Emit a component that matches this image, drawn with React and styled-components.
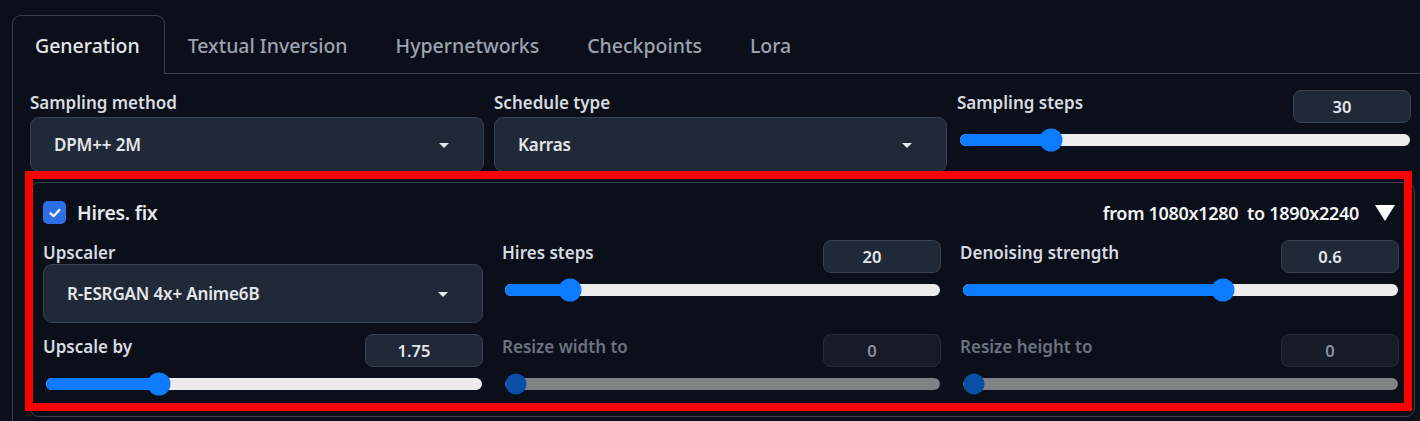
import React from "react";
import styled, { createGlobalStyle } from "styled-components";

const Global = createGlobalStyle`
  html, body { margin: 0; padding: 0; background: #0b0f19; overflow: hidden; }
  body { font-family: "Noto Sans", "Open Sans", sans-serif; color: #e5e7eb; }
  * { box-sizing: border-box; }
`;

const Page = styled.div`
  width: 1420px;
  height: 421px;
  padding: 16px 0 0 12px;
  overflow: hidden;
`;

const Tabs = styled.div`
  width: 1420px;
`;

const TabList = styled.div`
  display: flex;
  align-items: flex-end;
  border-bottom: 1px solid #374151;
  height: 58px;
`;

const Tab = styled.div`
  height: ${(p) => (p.$active ? "59px" : "57px")};
  margin-bottom: ${(p) => (p.$active ? "-1px" : "0")};
  padding: 0 24px 0 22px;
  display: flex;
  align-items: center;
  font-size: 19.5px;
  font-weight: 500;
  color: ${(p) => (p.$active ? "#e5e7eb" : "#9ca3af")};
  background: #0b0f19;
  border: 1px solid ${(p) => (p.$active ? "#374151" : "transparent")};
  border-bottom: none;
  border-radius: 9px 9px 0 0;
`;

const Panel = styled.div`
  border: 1px solid #374151;
  border-top: none;
  padding: 16px 16px 20px 17px;
  height: 360px;
`;

const TopRow = styled.div`
  display: grid;
  grid-template-columns: 454px 453px 454px;
  column-gap: 10px;
`;

const Field = styled.div`
  display: flex;
  flex-direction: column;
`;

const Label = styled.div`
  padding-top: 2px;
  font-size: 17px;
  font-weight: 600;
  line-height: 22px;
  color: ${(p) => (p.$disabled ? "#6b7280" : "#d8dbe0")};
`;

const SelectBox = styled.div`
  margin-top: ${(p) => p.$mt}px;
  height: ${(p) => p.$h}px;
  background: #1f2937;
  border: 1px solid #374151;
  border-radius: 9px;
  display: flex;
  align-items: center;
  justify-content: space-between;
  padding: 0 34px 0 23px;
  font-size: 17px;
  font-weight: 600;
  color: #e5e7eb;
  letter-spacing: -0.15px;
`;

const Caret = styled.span`
  width: 0;
  height: 0;
  border-left: 5px solid transparent;
  border-right: 5px solid transparent;
  border-top: 5px solid #e5e7eb;
  margin-top: 2px;
`;

const SliderHead = styled.div`
  display: flex;
  justify-content: space-between;
  align-items: flex-start;
  height: 33px;
`;

const NumberBox = styled.div`
  width: 118px;
  height: 33px;
  background: ${(p) => (p.$disabled ? "#151b27" : "#1f2937")};
  border: 1px solid ${(p) => (p.$disabled ? "#252d3a" : "#374151")};
  border-radius: 8px;
  display: flex;
  align-items: center;
  justify-content: center;
  padding-right: 20px;
  font-size: 16.5px;
  font-weight: 600;
  color: ${(p) => (p.$disabled ? "#8b919c" : "#e5e7eb")};
`;

const Track = styled.div`
  position: relative;
  margin: 11px 1px 0 3px;
  height: 12px;
  border-radius: 6px;
  background: ${(p) => (p.$disabled ? "#808187" : "#ececec")};
`;

const Fill = styled.div`
  position: absolute;
  left: 0;
  top: 0;
  bottom: 0;
  border-radius: 6px;
  background: #0c7bff;
`;

const Thumb = styled.div`
  position: absolute;
  top: 50%;
  width: ${(p) => (p.$disabled ? 21 : 23)}px;
  height: ${(p) => (p.$disabled ? 21 : 23)}px;
  border-radius: 50%;
  transform: translate(-50%, -50%);
  background: ${(p) => (p.$disabled ? "#0b4ea6" : "#0c7bff")};
`;

const Slider = ({ label, value, pct, disabled }) => {
  const r = 11;
  const center = `calc(${r}px + (100% - ${2 * r}px) * ${pct})`;
  return (
    <Field>
      <SliderHead>
        <Label $disabled={disabled}>{label}</Label>
        <NumberBox $disabled={disabled}>{value}</NumberBox>
      </SliderHead>
      <Track $disabled={disabled}>
        {!disabled && <Fill style={{ width: center }} />}
        <Thumb $disabled={disabled} style={{ left: center }} />
      </Track>
    </Field>
  );
};

const Hires = styled.div`
  position: relative;
  margin-top: 10px;
  border: 1px solid #374151;
  border-radius: 9px;
  padding: 17px 13px 26px 12px;
`;

const Annotation = styled.div`
  position: absolute;
  top: -12px;
  left: -6px;
  right: 2px;
  bottom: 5px;
  border: 8px solid #ff0000;
  pointer-events: none;
`;

const HiresHead = styled.div`
  display: flex;
  align-items: center;
  justify-content: space-between;
  height: 25px;
  margin-bottom: 15px;
`;

const CheckWrap = styled.div`
  display: flex;
  align-items: center;
  gap: 11px;
`;

const Checkbox = styled.div`
  width: 23px;
  height: 23px;
  border-radius: 5px;
  background: #2f6fe6;
  display: flex;
  align-items: center;
  justify-content: center;
`;

const HiresTitle = styled.div`
  font-size: 19.5px;
  font-weight: 600;
  color: #e5e7eb;
  letter-spacing: -0.3px;
`;

const Resolution = styled.div`
  display: flex;
  align-items: center;
  gap: 16px;
  padding-right: 6px;
  font-size: 18px;
  font-weight: 600;
  white-space: pre;
  color: #f3f4f6;
  letter-spacing: -0.3px;
`;

const BigTriangle = styled.span`
  width: 0;
  height: 0;
  border-left: 10px solid transparent;
  border-right: 10px solid transparent;
  border-top: 16px solid #ffffff;
`;

const HiresGrid = styled.div`
  display: grid;
  grid-template-columns: 440px 439px 439px;
  column-gap: 19px;
  row-gap: 11px;
`;

export default function App() {
  return (
    <>
      <Global />
      <Page>
        <Tabs>
          <TabList>
            <Tab $active>Generation</Tab>
            <Tab>Textual Inversion</Tab>
            <Tab>Hypernetworks</Tab>
            <Tab>Checkpoints</Tab>
            <Tab>Lora</Tab>
          </TabList>
          <Panel>
            <TopRow>
              <Field>
                <Label>Sampling method</Label>
                <SelectBox $mt={3} $h={55}>
                  DPM++ 2M
                  <Caret />
                </SelectBox>
              </Field>
              <Field>
                <Label>Schedule type</Label>
                <SelectBox $mt={3} $h={55}>
                  Karras
                  <Caret />
                </SelectBox>
              </Field>
              <Slider label="Sampling steps" value="30" pct={0.187} />
            </TopRow>
            <Hires>
              <Annotation />
              <HiresHead>
                <CheckWrap>
                  <Checkbox>
                    <svg width="14" height="14" viewBox="0 0 14 14">
                      <path
                        d="M2.5 7.3 L5.6 10.2 L11.5 3.8"
                        fill="none"
                        stroke="#ffffff"
                        strokeWidth="2.2"
                        strokeLinecap="round"
                        strokeLinejoin="round"
                      />
                    </svg>
                  </Checkbox>
                  <HiresTitle>Hires. fix</HiresTitle>
                </CheckWrap>
                <Resolution>
                  {"from 1080x1280  to 1890x2240"}
                  <BigTriangle />
                </Resolution>
              </HiresHead>
              <HiresGrid>
                <Field>
                  <Label>Upscaler</Label>
                  <SelectBox $h={59} $mt={0}>
                    R-ESRGAN 4x+ Anime6B
                    <Caret />
                  </SelectBox>
                </Field>
                <Slider label="Hires steps" value="20" pct={0.131} />
                <Slider label="Denoising strength" value="0.6" pct={0.603} />
                <Slider label="Upscale by" value="1.75" pct={0.246} />
                <Slider label="Resize width to" value="0" pct={0} disabled />
                <Slider label="Resize height to" value="0" pct={0} disabled />
              </HiresGrid>
            </Hires>
          </Panel>
        </Tabs>
      </Page>
    </>
  );
}
